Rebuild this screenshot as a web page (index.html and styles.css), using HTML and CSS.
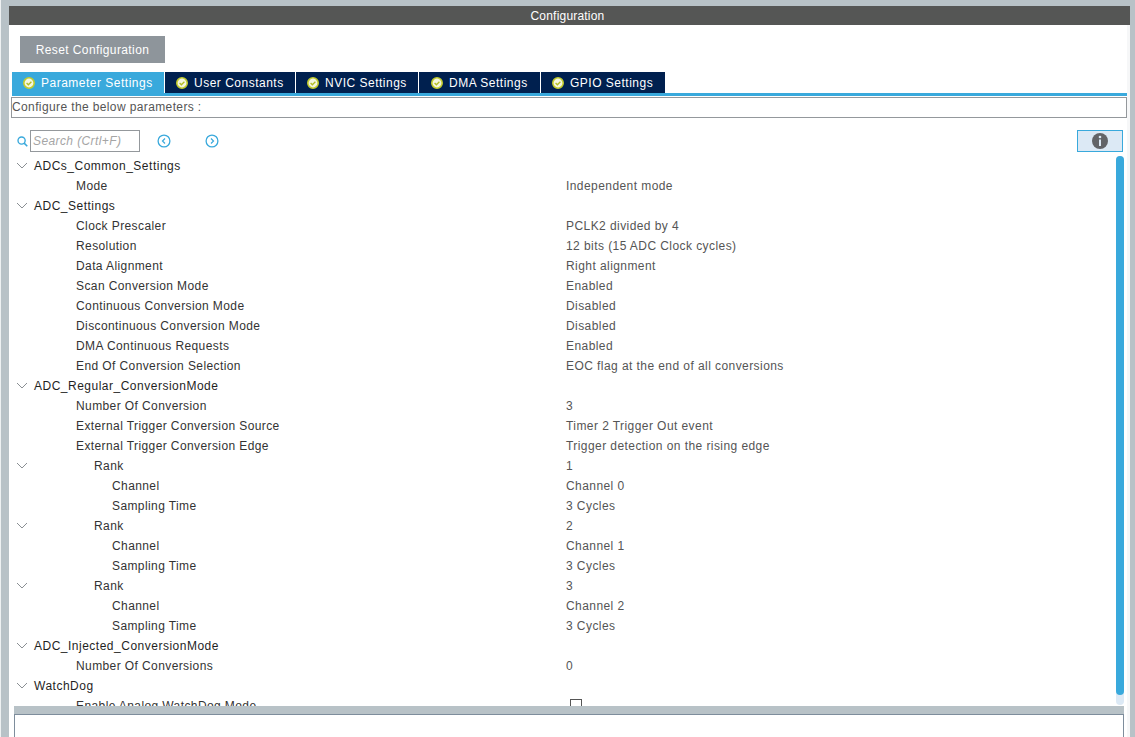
FILE: index.html
```html
<!DOCTYPE html>
<html lang="en">
<head>
<meta charset="utf-8">
<title>Configuration</title>
<link rel="stylesheet" href="styles.css">
</head>
<body>
<div class="edge"></div>
<main class="panel">
  <header class="title">Configuration</header>
  <div class="actions"><button class="reset">Reset Configuration</button></div>
  <nav class="tabs">
    <div class="tab active"><svg class="ok" viewBox="0 0 12 12"><circle cx="6" cy="6" r="5.2" fill="#f4f6e0" stroke="#c3cc2c" stroke-width="1.6"/><path d="M3.6 6l1.8 1.8 3-3" fill="none" stroke="#b3bd22" stroke-width="1.3"/></svg>Parameter Settings</div>
    <div class="tab"><svg class="ok" viewBox="0 0 12 12"><circle cx="6" cy="6" r="5.2" fill="#f4f6e0" stroke="#c3cc2c" stroke-width="1.6"/><path d="M3.6 6l1.8 1.8 3-3" fill="none" stroke="#b3bd22" stroke-width="1.3"/></svg>User Constants</div>
    <div class="tab"><svg class="ok" viewBox="0 0 12 12"><circle cx="6" cy="6" r="5.2" fill="#f4f6e0" stroke="#c3cc2c" stroke-width="1.6"/><path d="M3.6 6l1.8 1.8 3-3" fill="none" stroke="#b3bd22" stroke-width="1.3"/></svg>NVIC Settings</div>
    <div class="tab"><svg class="ok" viewBox="0 0 12 12"><circle cx="6" cy="6" r="5.2" fill="#f4f6e0" stroke="#c3cc2c" stroke-width="1.6"/><path d="M3.6 6l1.8 1.8 3-3" fill="none" stroke="#b3bd22" stroke-width="1.3"/></svg>DMA Settings</div>
    <div class="tab"><svg class="ok" viewBox="0 0 12 12"><circle cx="6" cy="6" r="5.2" fill="#f4f6e0" stroke="#c3cc2c" stroke-width="1.6"/><path d="M3.6 6l1.8 1.8 3-3" fill="none" stroke="#b3bd22" stroke-width="1.3"/></svg>GPIO Settings</div>
  </nav>
  <div class="hint">Configure the below parameters :</div>
  <div class="toolbar">
    <svg class="search-icon" viewBox="0 0 12 12"><circle cx="5" cy="5" r="3.9" fill="none" stroke="#39a9dc" stroke-width="1.5"/><path d="M7.8 7.8l3.4 3.4" stroke="#39a9dc" stroke-width="1.7"/></svg>
    <div class="search">Search (Crtl+F)</div>
    <svg class="nav-icon prev" viewBox="0 0 14 14"><circle cx="7" cy="7" r="5.9" fill="none" stroke="#39a9dc" stroke-width="1.3"/><path d="M8 4.5L5.5 7 8 9.5" fill="none" stroke="#39a9dc" stroke-width="1.2"/></svg>
    <svg class="nav-icon next" viewBox="0 0 14 14"><circle cx="7" cy="7" r="5.9" fill="none" stroke="#39a9dc" stroke-width="1.3"/><path d="M6 4.5L8.5 7 6 9.5" fill="none" stroke="#39a9dc" stroke-width="1.2"/></svg>
    <div class="info"><svg viewBox="0 0 16 16"><circle cx="8" cy="8" r="8" fill="#626468"/><circle cx="8" cy="4" r="1.3" fill="#dce9f5"/><rect x="7" y="6.5" width="2" height="6.5" fill="#dce9f5"/></svg></div>
  </div>
  <div class="tree-wrap">
    <div class="tree">
      <div class="row head"><svg class="chev" viewBox="0 0 12 7"><path d="M1 1l5 5 5-5"/></svg><span class="label">ADCs_Common_Settings</span><span></span></div>
      <div class="row l1"><span class="label">Mode</span><span class="val">Independent mode</span></div>
      <div class="row head"><svg class="chev" viewBox="0 0 12 7"><path d="M1 1l5 5 5-5"/></svg><span class="label">ADC_Settings</span><span></span></div>
      <div class="row l1"><span class="label">Clock Prescaler</span><span class="val">PCLK2 divided by 4</span></div>
      <div class="row l1"><span class="label">Resolution</span><span class="val">12 bits (15 ADC Clock cycles)</span></div>
      <div class="row l1"><span class="label">Data Alignment</span><span class="val">Right alignment</span></div>
      <div class="row l1"><span class="label">Scan Conversion Mode</span><span class="val">Enabled</span></div>
      <div class="row l1"><span class="label">Continuous Conversion Mode</span><span class="val">Disabled</span></div>
      <div class="row l1"><span class="label">Discontinuous Conversion Mode</span><span class="val">Disabled</span></div>
      <div class="row l1"><span class="label">DMA Continuous Requests</span><span class="val">Enabled</span></div>
      <div class="row l1"><span class="label">End Of Conversion Selection</span><span class="val">EOC flag at the end of all conversions</span></div>
      <div class="row head"><svg class="chev" viewBox="0 0 12 7"><path d="M1 1l5 5 5-5"/></svg><span class="label">ADC_Regular_ConversionMode</span><span></span></div>
      <div class="row l1"><span class="label">Number Of Conversion</span><span class="val">3</span></div>
      <div class="row l1"><span class="label">External Trigger Conversion Source</span><span class="val">Timer 2 Trigger Out event</span></div>
      <div class="row l1"><span class="label">External Trigger Conversion Edge</span><span class="val">Trigger detection on the rising edge</span></div>
      <div class="row l2"><svg class="chev" viewBox="0 0 12 7"><path d="M1 1l5 5 5-5"/></svg><span class="label">Rank</span><span class="val">1</span></div>
      <div class="row l3"><span class="label">Channel</span><span class="val">Channel 0</span></div>
      <div class="row l3"><span class="label">Sampling Time</span><span class="val">3 Cycles</span></div>
      <div class="row l2"><svg class="chev" viewBox="0 0 12 7"><path d="M1 1l5 5 5-5"/></svg><span class="label">Rank</span><span class="val">2</span></div>
      <div class="row l3"><span class="label">Channel</span><span class="val">Channel 1</span></div>
      <div class="row l3"><span class="label">Sampling Time</span><span class="val">3 Cycles</span></div>
      <div class="row l2"><svg class="chev" viewBox="0 0 12 7"><path d="M1 1l5 5 5-5"/></svg><span class="label">Rank</span><span class="val">3</span></div>
      <div class="row l3"><span class="label">Channel</span><span class="val">Channel 2</span></div>
      <div class="row l3"><span class="label">Sampling Time</span><span class="val">3 Cycles</span></div>
      <div class="row head"><svg class="chev" viewBox="0 0 12 7"><path d="M1 1l5 5 5-5"/></svg><span class="label">ADC_Injected_ConversionMode</span><span></span></div>
      <div class="row l1"><span class="label">Number Of Conversions</span><span class="val">0</span></div>
      <div class="row head"><svg class="chev" viewBox="0 0 12 7"><path d="M1 1l5 5 5-5"/></svg><span class="label">WatchDog</span><span></span></div>
      <div class="row l1"><span class="label">Enable Analog WatchDog Mode</span><span class="val"><span class="check"></span></span></div>
    </div>
    <div class="scrollbar"><div class="thumb"></div></div>
  </div>
  <div class="splitter"></div>
  <div class="bottom"></div>
</main>
</body>
</html>
```
FILE: styles.css
```css
* { box-sizing: border-box; }
html, body { margin: 0; height: 100%; }
body {
  display: flex;
  height: 737px;
  overflow: hidden;
  background: #b8c2c7;
  padding: 6px 5px 0 0;
  font: 12px "Liberation Sans", Arial, sans-serif;
  letter-spacing: 0.4px;
  color: #333;
}
.edge { width: 9px; flex: none; margin-top: -6px; border-left: 1px solid #eef1f2; }
.panel {
  flex: 1;
  display: flex;
  flex-direction: column;
  background: #fff;
  min-width: 0;
  border-right: 3px solid #f6f7f8;
}
.title {
  margin-right: -3px;
  height: 19px;
  flex: none;
  padding-right: 4px;
  background: #555655;
  color: #fff;
  text-align: center;
  line-height: 21px;
  letter-spacing: 0.2px;
}
.actions { height: 47px; flex: none; padding: 11px 0 0 11px; }
.reset {
  display: block;
  width: 145px;
  height: 27px;
  padding: 0;
  border: 0;
  background: #8e959b;
  color: #fff;
  font: inherit;
  letter-spacing: 0.4px;
}
.tabs {
  display: flex;
  height: 24px;
  flex: none;
  margin-left: 3px;
  border-bottom: 3px solid #39a9dc;
}
.tab {
  display: flex;
  align-items: center;
  height: 21px;
  padding-left: 11px;
  margin-right: 1px;
  background: #00204f;
  color: #fff;
  letter-spacing: 0.5px;
}
.tab.active { width: 152px; background: #39a9dc; }
.tab:nth-child(2) { width: 130px; }
.tab:nth-child(3) { width: 122px; }
.tab:nth-child(4) { width: 121px; padding-left: 12px; }
.tab:nth-child(5) { width: 124px; margin-right: 0; }
.ok { width: 12px; height: 12px; margin-right: 6px; flex: none; }
.hint {
  height: 21px;
  flex: none;
  margin: 1px 0 0 2px;
  border: 1px solid #94989c;
  line-height: 19px;
  color: #555;
  letter-spacing: 0.38px;
}
.toolbar {
  position: relative;
  display: flex;
  align-items: center;
  height: 22px;
  flex: none;
  margin-top: 12px;
  padding-left: 8px;
}
.search-icon { width: 11px; height: 11px; margin-right: 2px; flex: none; }
.search {
  width: 110px;
  height: 22px;
  border: 1px solid #94989c;
  padding-left: 2px;
  line-height: 20px;
  font-style: italic;
  color: #a5a5a5;
}
.nav-icon { width: 14px; height: 14px; flex: none; }
.prev { margin-left: 17px; }
.next { margin-left: 34px; }
.info {
  display: flex;
  align-items: center;
  justify-content: center;
  width: 46px;
  height: 22px;
  margin-left: auto;
  margin-right: 4px;
  background: #dce9f5;
  border: 1px solid #39a9dc;
}
.info svg { width: 16px; height: 16px; }
.tree-wrap {
  position: relative;
  height: 551px;
  flex: none;
  margin-top: 3px;
  overflow: hidden;
}
.tree { padding-left: 5px; }
.row {
  position: relative;
  display: grid;
  grid-template-columns: 552px 1fr;
  height: 20px;
  line-height: 22px;
  white-space: nowrap;
}
.row .label { padding-left: 20px; }
.row.head .label { color: #1f1f1f; letter-spacing: 0.5px; }
.row.l1 .label { padding-left: 62px; }
.row.l2 .label { padding-left: 80px; }
.row.l3 .label { padding-left: 98px; }
.val { color: #555; letter-spacing: 0.43px; }
.chev {
  position: absolute;
  left: 2px;
  top: 7px;
  width: 12px;
  height: 7px;
  fill: none;
  stroke: #8a8f93;
  stroke-width: 1;
}
.check {
  display: block;
  width: 12px;
  height: 12px;
  margin: 4px 0 0 4px;
  border: 1px solid #555;
}
.scrollbar {
  position: absolute;
  top: 1px;
  right: 3px;
  bottom: 1px;
  width: 8px;
  background: #dce9f5;
  border-radius: 4px;
}
.thumb { height: 539px; background: #39a9dc; border-radius: 4px; }
.splitter { height: 9px; flex: none; margin-left: 5px; margin-right: 3px; background: #b8c2c7; border-bottom: 1px solid #7e8d9c; }
.bottom { flex: 1; margin: 0 3px 0 5px; border-left: 1px solid #7e8d9c; border-right: 1px solid #7e8d9c; }
```
